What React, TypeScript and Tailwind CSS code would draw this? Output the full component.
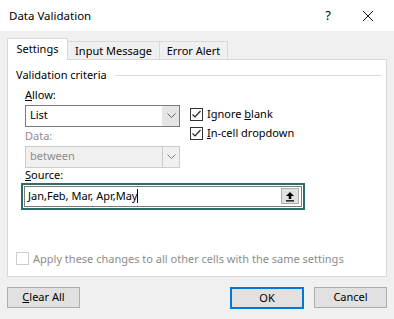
import React from 'react';

const font = { fontFamily: '"Segoe UI", "Noto Sans", sans-serif' };

const Chevron = ({ color = '#555' }: { color?: string }) => (
  <svg width="9" height="6" viewBox="0 0 9 6">
    <polyline points="0.5,0.5 4.5,4.5 8.5,0.5" fill="none" stroke={color} strokeWidth="1" />
  </svg>
);

const Check = ({ checked, disabled }: { checked?: boolean; disabled?: boolean }) => (
  <div
    className={`w-[13px] h-[13px] border flex items-center justify-center bg-white shrink-0 ${
      disabled ? 'border-[#cccccc]' : 'border-[#333333]'
    }`}
  >
    {checked && (
      <svg width="11" height="11" viewBox="0 0 11 11">
        <polyline points="1.5,5.5 4,8 9.5,2" fill="none" stroke="#222" strokeWidth="1.2" />
      </svg>
    )}
  </div>
);

const Combo = ({ value, disabled }: { value: string; disabled?: boolean }) => (
  <div
    className={`w-[155px] h-[22px] border flex ${
      disabled ? 'border-[#cccccc] bg-[#f0f0f0]' : 'border-[#7a7a7a] bg-white'
    }`}
  >
    <div className={`flex-1 flex items-center pl-[4px] ${disabled ? 'text-[#8c8c8c]' : 'text-black'}`}>{value}</div>
    <div
      className={`w-[17px] flex items-center justify-center ${
        disabled ? 'bg-[#f0f0f0] border-l border-[#cccccc]' : 'bg-[#e5e5e5] border-l border-[#e5e5e5]'
      }`}
    >
      <Chevron color={disabled ? '#808080' : '#606060'} />
    </div>
  </div>
);

export default function App() {
  return (
    <div className="w-[394px] h-[319px] bg-[#f0f0f0] flex flex-col text-[11px] text-black" style={font}>
      {/* 标题栏 */}
      <div className="h-[31px] bg-white flex items-center pl-[9px] shrink-0">
        <span className="flex-1 text-[11.5px]">Data Validation</span>
        <span className="w-[20px] text-center text-[13px] mr-[24px]">?</span>
        <svg width="12" height="12" viewBox="0 0 12 12" className="mr-[20px]">
          <path d="M1 1 L11 11 M11 1 L1 11" stroke="#111" strokeWidth="1" />
        </svg>
      </div>

      <div className="px-[7px] pt-[7px] flex flex-col">
        {/* 选项卡 */}
        <div className="flex items-end h-[22px] relative z-10">
          <div className="h-[22px] w-[61px] bg-white border border-[#d9d9d9] border-b-0 flex items-center justify-center pb-[1px]">
            Settings
          </div>
          <div className="h-[19px] w-[92px] border border-[#d9d9d9] border-l-0 border-b-0 flex items-center justify-center">
            Input Message
          </div>
          <div className="h-[19px] w-[68px] border border-[#d9d9d9] border-l-0 border-b-0 flex items-center justify-center">
            Error Alert
          </div>
        </div>

        {/* 面板 */}
        <div className="h-[218px] bg-white border border-[#d9d9d9] -mt-[1px] flex flex-col pl-[8px] pr-[4px]">
          <div className="flex items-center mt-[7px]">
            <span>Validation criteria</span>
            <div className="flex-1 h-[1px] bg-[#dcdcdc] ml-[8px] mt-[1px]" />
          </div>

          <div className="flex pl-[9px] mt-[3px]">
            <div className="flex flex-col">
              <div className="h-[18px] flex items-center">
                <span><span className="underline">A</span>llow:</span>
              </div>
              <Combo value="List" />
              <div className="h-[19px] flex items-center text-[#8c8c8c]">Data:</div>
              <Combo value="between" disabled />
            </div>
            <div className="flex flex-col ml-[10px] mt-[21px] gap-[6px]">
              <div className="flex items-center gap-[4px] h-[13px]">
                <Check checked />
                <span>Ignore <span className="underline">b</span>lank</span>
              </div>
              <div className="flex items-center gap-[4px] h-[13px]">
                <Check checked />
                <span><span className="underline">I</span>n-cell dropdown</span>
              </div>
            </div>
          </div>

          <div className="pl-[9px] h-[15px] flex items-center">
            <span><span className="underline">S</span>ource:</span>
          </div>
          <div className="ml-[5px] w-[284px] h-[27px] border-2 border-[#2e6b6b] p-[1px] flex">
            <div className="flex-1 border border-[#7a7a7a] bg-white flex items-center pl-[3px] pr-[2px]">
              <span>Jan,Feb, Mar, Apr,May</span>
              <span className="w-[1px] h-[14px] bg-black" />
              <div className="flex-1" />
              <div className="w-[18px] h-[16px] bg-[#e1e1e1] border border-[#adadad] flex items-center justify-center">
                <svg width="10" height="11" viewBox="0 0 10 11">
                  <path d="M5 1 L9 5 L6.3 5 L6.3 8 L3.7 8 L3.7 5 L1 5 Z" fill="#000" />
                  <rect x="1" y="9.2" width="8" height="1.3" fill="#000" />
                </svg>
              </div>
            </div>
          </div>

          <div className="flex-1" />
          <div className="flex items-center gap-[4px] mb-[9px]">
            <Check disabled />
            <span className="text-[#8c8c8c]">Apply these changes to all other cells with the same settings</span>
          </div>
        </div>

        {/* 按钮 */}
        <div className="flex mt-[10px]">
          <div className="w-[73px] h-[21px] bg-[#e1e1e1] border border-[#adadad] flex items-center justify-center">
            <span><span className="underline">C</span>lear All</span>
          </div>
          <div className="flex-1" />
          <div className="w-[74px] h-[22px] bg-[#e1e1e1] border-2 border-[#0078d7] flex items-center justify-center">
            OK
          </div>
          <div className="w-[73px] h-[21px] ml-[10px] bg-[#e1e1e1] border border-[#adadad] flex items-center justify-center">
            Cancel
          </div>
        </div>
      </div>
    </div>
  );
}
